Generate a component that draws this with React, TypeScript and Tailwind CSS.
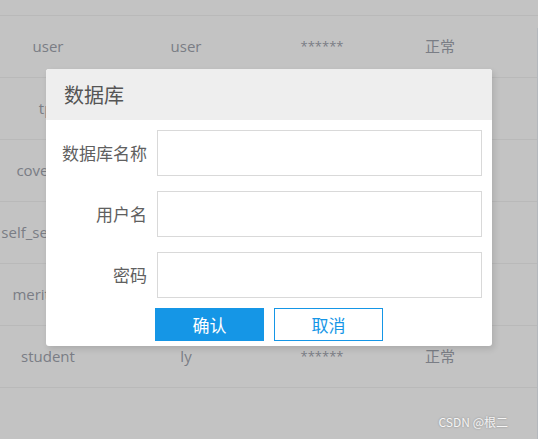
import React from "react";

const ROWS = [
  ["user", "user", "******", "正常"],
  ["tpl", "tpl", "******", "正常"],
  ["coverage", "cov", "******", "正常"],
  ["self_selection", "ss", "******", "正常"],
  ["merit_info", "mi", "******", "正常"],
  ["student", "ly", "******", "正常"],
];

// column centres: 48 / 186 / 322 / 440
const COLS = ["w-[96px]", "w-[180px]", "w-[92px]", "w-[144px]"];

const FIELDS = ["数据库名称", "用户名", "密码"];

export default function App() {
  return (
    <div
      className="relative w-[538px] h-[439px] overflow-hidden bg-[#c3c3c3]"
      style={{ fontFamily: '"Open Sans", "Noto Sans CJK SC", sans-serif' }}
    >
      {/* table behind the mask */}
      <div className="flex flex-col">
        <div className="h-[15px]" />
        {ROWS.map((r, i) => (
          <div
            key={i}
            className="flex h-[62px] items-center border-t border-[#b9b9b9] text-[15px] text-[#7a7d85]"
          >
            {r.map((c, j) => (
              <div
                key={j}
                className={`${COLS[j]} flex justify-center whitespace-nowrap ${j === 2 ? "text-[13px]" : ""}`}
              >
                {c}
              </div>
            ))}
          </div>
        ))}
        <div className="border-t border-[#b9b9b9]" />
      </div>

      {/* scrollbar edge */}
      <div className="absolute right-0 top-[28px] bottom-0 w-px bg-[#b4b8bd]" />

      {/* dialog */}
      <div
        className="absolute left-[46px] top-[69px] w-[446px] rounded-[3px] bg-white shadow-[2px_3px_6px_rgba(0,0,0,0.12)] overflow-hidden"
        style={{ fontFamily: '"Noto Sans CJK SC", "Open Sans", sans-serif' }}
      >
        <div className="flex h-[51px] items-center bg-[#eeeeee] pl-[18px] text-[20px] text-[#555555]">
          数据库
        </div>
        <div className="flex flex-col gap-[15px] pt-[10px]">
          {FIELDS.map((f) => (
            <div key={f} className="flex items-center gap-[10px]">
              <div className="w-[101px] whitespace-nowrap text-right text-[17px] text-[#606060]">
                {f}
              </div>
              <input
                type={f === "密码" ? "password" : "text"}
                className="h-[46px] w-[325px] border border-[#d9d9d9] bg-white px-2 outline-none"
              />
            </div>
          ))}
        </div>
        <div className="flex gap-[10px] pl-[109px] pt-[10px] pb-[5px]">
          <button className="h-[33px] w-[109px] bg-[#1596e6] text-[17px] text-white">
            确认
          </button>
          <button className="h-[33px] w-[109px] border border-[#1596e6] bg-white text-[17px] text-[#1596e6]">
            取消
          </button>
        </div>
      </div>

      {/* watermark */}
      <div
        className="absolute right-[30px] bottom-[8px] text-[12px] text-white/90 [text-shadow:0_0_2px_rgba(0,0,0,0.35)]"
        style={{ fontFamily: '"Noto Sans CJK SC", sans-serif' }}
      >
        CSDN @根二
      </div>
    </div>
  );
}
